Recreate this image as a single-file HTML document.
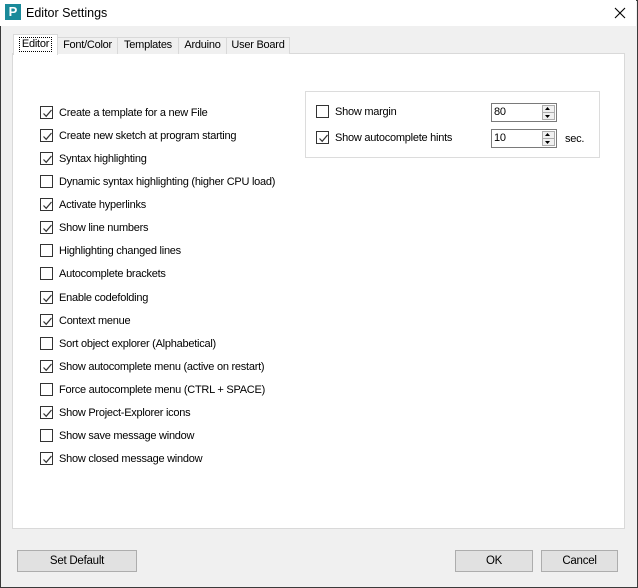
<!DOCTYPE html>
<html><head><meta charset="utf-8"><style>
*{margin:0;padding:0;box-sizing:border-box}
body{width:638px;height:588px;background:#f0f0f0;font-family:"Liberation Sans",sans-serif;font-size:11px;letter-spacing:-0.25px;color:#000;position:relative;overflow:hidden}
.win{position:absolute;left:0;top:0;width:638px;height:588px;border:1px solid #3a3a3a}
.title{position:absolute;left:0;top:0;width:636px;height:26px;background:#fff}
.abs{position:absolute}
.cb{position:absolute;width:13px;height:13px;border:1px solid #333;background:#fff}
.cb svg{position:absolute;left:1px;top:1px}
.lbl{position:absolute;white-space:nowrap;line-height:14px}
.tab{position:absolute;top:37px;height:17px;border:1px solid #d9d9d9;border-bottom:none;background:#f0f0f0;text-align:center;line-height:15px}
.btn{position:absolute;height:22px;background:#e1e1e1;border:1px solid #adadad;text-align:center;line-height:20px;font-size:11.5px}
.spin{position:absolute;width:66px;height:19px;border:1px solid #7a7a7a;background:#fff;line-height:17px;padding-left:2px}
.spin .b{position:absolute;right:1px;width:13px;height:8px;background:#f0f0f0;border:1px solid #adadad}
</style></head><body>
<div class="win"></div>
<div class="title"></div>
<div class="abs" style="left:5px;top:4px;width:16px;height:16px;background:#1a8a9a;color:#fff;font-weight:bold;font-size:13px;line-height:16px;text-align:center;letter-spacing:0">P</div>
<div class="lbl" style="left:26px;top:6px;font-size:12.5px;letter-spacing:0">Editor Settings</div>
<svg class="abs" style="left:614px;top:7px" width="12" height="12"><path d="M1 1L11 11M11 1L1 11" stroke="#000" stroke-width="1.1"/></svg>

<div class="abs" style="left:12px;top:53px;width:613px;height:476px;background:#fff;border:1px solid #d9d9d9"></div>
<div class="tab" style="left:57px;width:61px">Font/Color</div>
<div class="tab" style="left:117px;width:62px">Templates</div>
<div class="tab" style="left:178px;width:49px">Arduino</div>
<div class="tab" style="left:226px;width:64px">User Board</div>
<div class="tab" style="left:13px;top:34px;height:21px;width:45px;background:#fff;z-index:2"><span style="display:inline-block;border:1px dotted #000;padding:0 2px;line-height:13px;margin-top:2px">Editor</span></div>

<div class="abs" style="left:305px;top:91px;width:295px;height:67px;border:1px solid #dcdcdc"></div>

<div class="btn" style="left:17px;top:550px;width:120px">Set Default</div>
<div class="btn" style="left:455px;top:550px;width:78px">OK</div>
<div class="btn" style="left:541px;top:550px;width:77px">Cancel</div>

<div class="spin" style="left:491px;top:103px">80<div class="b" style="top:1px"></div><div class="b" style="top:8px"></div></div>
<div class="spin" style="left:491px;top:129px">10<div class="b" style="top:1px"></div><div class="b" style="top:8px"></div></div>
<div class="lbl" style="left:565px;top:132px">sec.</div>

<script>
var chk='<svg width="11" height="11"><path d="M1.5 5.5L4.2 8.3L9.5 2" fill="none" stroke="#333" stroke-width="1.2"/></svg>';
function add(x,y,t,c){document.body.insertAdjacentHTML('beforeend','<div class="cb" style="left:'+x+'px;top:'+y+'px">'+(c?chk:'')+'</div><div class="lbl" style="left:'+(x+19)+'px;top:'+(y)+'px">'+t+'</div>');}
var items=[["Create a template for a new File",1],["Create new sketch at program starting",1],["Syntax highlighting",1],["Dynamic syntax highlighting (higher CPU load)",0],["Activate hyperlinks",1],["Show line numbers",1],["Highlighting changed lines",0],["Autocomplete brackets",0],["Enable codefolding",1],["Context menue",1],["Sort object explorer (Alphabetical)",0],["Show autocomplete menu (active on restart)",1],["Force autocomplete menu (CTRL + SPACE)",0],["Show Project-Explorer icons",1],["Show save message window",0],["Show closed message window",1]];
items.forEach(function(it,i){add(40,Math.round(106+i*23.07),it[0],it[1]);});
add(316,105,"Show margin",0);
add(316,131,"Show autocomplete hints",1);
</script>
<svg class="abs" style="left:543px;top:106px" width="10" height="40"><path d="M2 4h5l-2.5-3z M2 9h5l-2.5 3z M2 30h5l-2.5-3z M2 35h5l-2.5 3z" fill="#000"/></svg>
</body></html>
